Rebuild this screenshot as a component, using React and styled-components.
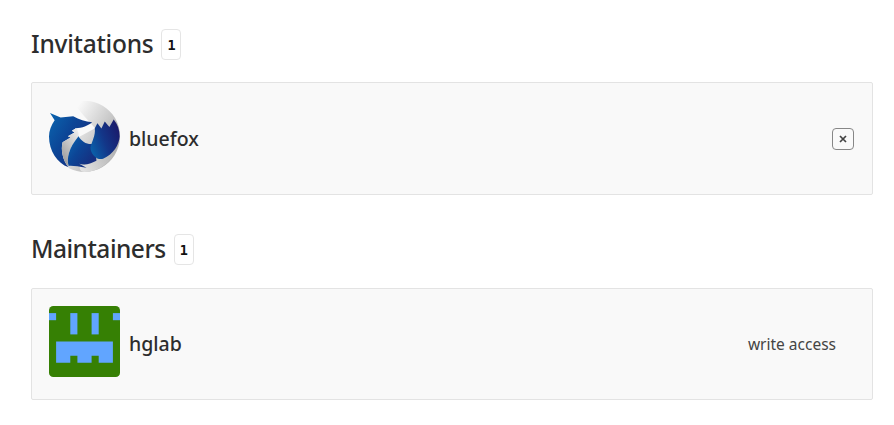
import React from 'react';
import styled, { createGlobalStyle } from 'styled-components';

const GlobalStyle = createGlobalStyle`
  html, body {
    margin: 0;
    padding: 0;
    background: #fff;
  }
  body {
    font-family: 'Noto Sans', 'Open Sans', sans-serif;
    color: #2d2d2d;
  }
`;

const Page = styled.div`
  padding: 29px 21px 0 31px;
`;

const Section = styled.section`
  margin-bottom: 39px;
`;

const Heading = styled.div`
  display: flex;
  align-items: center;
  gap: 8px;
  height: 31px;
  margin-bottom: ${(p) => p.$below}px;
`;

const Title = styled.h2`
  margin: 0 0 2px;
  font-size: 24.5px;
  font-weight: 500;
  line-height: 29px;
  letter-spacing: ${(p) => p.$tracking}px;
  color: #2d2d2d;
`;

const Count = styled.span`
  box-sizing: border-box;
  width: 20px;
  height: 31px;
  display: flex;
  align-items: center;
  justify-content: center;
  border: 1px solid #e5e5e5;
  border-radius: 4px;
  background: #fff;
  font-family: 'DejaVu Sans Mono', monospace;
  font-size: 13.5px;
  font-weight: 700;
  color: #111;
`;

const Card = styled.div`
  box-sizing: border-box;
  display: flex;
  align-items: center;
  justify-content: space-between;
  height: ${(p) => p.$height}px;
  padding: 0 18px 0 17px;
  background: #f9f9f9;
  border: 1px solid #e3e3e3;
  border-radius: 2px;
`;

const Who = styled.div`
  display: flex;
  align-items: center;
  gap: 9px;
`;

const Avatar = styled.svg`
  display: block;
  width: 71px;
  height: 71px;
  margin-bottom: ${(p) => p.$lift}px;
`;

const Name = styled.span`
  margin-bottom: 1px;
  font-size: 19.5px;
  font-weight: 500;
  color: #2d2d2d;
`;

const CloseButton = styled.button`
  box-sizing: border-box;
  width: 22px;
  height: 22px;
  padding: 0;
  display: flex;
  align-items: center;
  justify-content: center;
  background: #fafafa;
  border: 1px solid #878787;
  border-radius: 4px;
  color: #444;
`;

const Access = styled.span`
  margin-right: 18px;
  font-size: 15.5px;
  color: #444;
`;

function FoxLogo() {
  return (
    <Avatar $lift={4} viewBox="27 18 214 214">
      <defs>
        <linearGradient id="ring" gradientUnits="userSpaceOnUse" x1="110" y1="40" x2="225" y2="110">
          <stop offset="0" stopColor="#f9f9f9" />
          <stop offset="1" stopColor="#b8b8b8" />
        </linearGradient>
        <linearGradient id="under" gradientUnits="userSpaceOnUse" x1="120" y1="220" x2="230" y2="160">
          <stop offset="0" stopColor="#e4e4e4" />
          <stop offset="1" stopColor="#b0b0b0" />
        </linearGradient>
        <linearGradient id="head" x1="0" y1="0" x2="0.9" y2="0.7">
          <stop offset="0" stopColor="#0a66b0" />
          <stop offset="0.5" stopColor="#0c4596" />
          <stop offset="1" stopColor="#162f80" />
        </linearGradient>
        <linearGradient id="tail" x1="0" y1="0.7" x2="1" y2="0.2">
          <stop offset="0" stopColor="#0a5ea8" />
          <stop offset="0.45" stopColor="#133688" />
          <stop offset="1" stopColor="#1b1868" />
        </linearGradient>
        <linearGradient id="streak" x1="0.8" y1="0" x2="0.2" y2="1">
          <stop offset="0" stopColor="#ececec" />
          <stop offset="1" stopColor="#989898" />
        </linearGradient>
      </defs>
      <path d="M100 23 A107 107 0 1 1 86 220 L120 125 L166 100 L130 60 Z" fill="url(#ring)" />
      <path d="M120 215 C150 205 190 195 238 135 C232 190 185 232 134 232 C125 232 118 226 120 215 Z" fill="url(#under)" />
      <path
        d="M30 54 L62 68 L100 64 C118 74 136 80 157 82 C146 92 126 100 108 100 L96 108 L104 113 L84 124 L92 128 L68 142 C62 165 68 195 86 218 C52 206 27 168 27 125 C27 108 34 90 44 76 Z"
        fill="url(#head)"
      />
      <path
        d="M108 100 L96 108 L104 113 L84 124 L92 128 L68 142 C62 165 68 195 86 218 C80 190 86 160 116 124 C118 114 114 106 108 100 Z"
        fill="url(#streak)"
      />
      <path
        d="M116 124 C126 142 146 152 164 146 L170 198 C150 208 136 212 118 207 L140 219 C115 216 96 212 86 214 C80 190 86 160 116 124 Z"
        fill="url(#head)"
      />
      <path
        d="M165 100 C168 96 170 90 173 85 L185 101 L195 80 L209 96 L222 74 C234 88 240 106 240 125 C238 150 222 178 190 192 C172 198 152 178 152 158 C156 140 168 122 165 100 Z"
        fill="url(#tail)"
      />
    </Avatar>
  );
}

function BlockAvatar() {
  return (
    <Avatar $lift={5} viewBox="0 0 10 10">
      <rect width="10" height="10" rx="0.6" fill="#368004" />
      <g fill="#61a5ff">
        <rect x="0" y="1" width="1" height="1" />
        <rect x="9" y="1" width="1" height="1" />
        <rect x="3" y="1" width="1" height="3" />
        <rect x="6" y="1" width="1" height="3" />
        <path d="M1 5 H9 V8 H7 V7 H6 V8 H4 V7 H3 V8 H1 Z" />
      </g>
    </Avatar>
  );
}

function Members({ title, count, below, tracking, children }) {
  return (
    <Section>
      <Heading $below={below}>
        <Title $tracking={tracking}>{title}</Title>
        <Count>{count}</Count>
      </Heading>
      {children}
    </Section>
  );
}

export default function App() {
  return (
    <Page>
      <GlobalStyle />
      <Members title="Invitations" count={1} below={22} tracking={-0.25}>
        <Card $height={113}>
          <Who>
            <FoxLogo />
            <Name>bluefox</Name>
          </Who>
          <CloseButton aria-label="Remove">
            <svg width="10" height="10" viewBox="0 0 10 10">
              <path d="M2 2 L8 8 M8 2 L2 8" stroke="currentColor" strokeWidth="1.7" fill="none" />
            </svg>
          </CloseButton>
        </Card>
      </Members>
      <Members title="Maintainers" count={1} below={23} tracking={-0.5}>
        <Card $height={112}>
          <Who>
            <BlockAvatar />
            <Name>hglab</Name>
          </Who>
          <Access>write access</Access>
        </Card>
      </Members>
    </Page>
  );
}
